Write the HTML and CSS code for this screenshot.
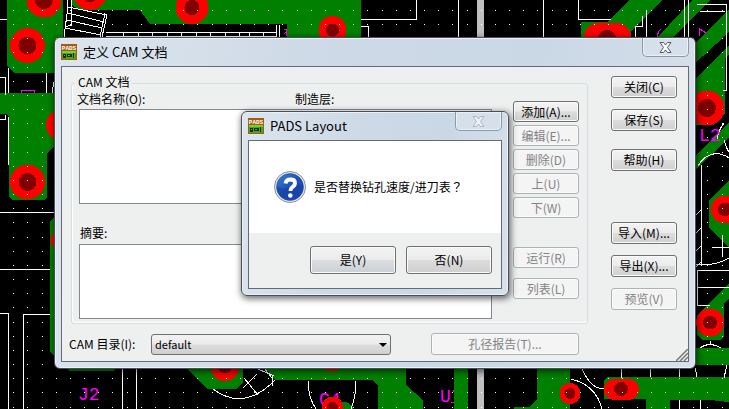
FILE: index.html
```html
<!DOCTYPE html>
<html lang="zh-CN">
<head>
<meta charset="utf-8">
<title>PADS Layout</title>
<link rel="stylesheet" href="styles.css">
</head>
<body>
<main class="desktop">
  <svg class="board" viewBox="0 0 729 409" preserveAspectRatio="xMinYMin slice" aria-hidden="true">
    <defs>
      <pattern id="dot-row" x="13" y="0" width="85" height="85" patternUnits="userSpaceOnUse">
        <path fill="#fff" d="M0 10h1v1h-1zM14 10h1v1h-1zM29 10h1v1h-1zM43 10h1v1h-1zM57 10h1v1h-1zM71 10h1v1h-1zM0 24h1v1h-1zM14 24h1v1h-1zM29 24h1v1h-1zM43 24h1v1h-1zM57 24h1v1h-1zM71 24h1v1h-1zM0 38h1v1h-1zM14 38h1v1h-1zM29 38h1v1h-1zM43 38h1v1h-1zM57 38h1v1h-1zM71 38h1v1h-1zM0 52h1v1h-1zM14 52h1v1h-1zM29 52h1v1h-1zM43 52h1v1h-1zM57 52h1v1h-1zM71 52h1v1h-1zM0 67h1v1h-1zM14 67h1v1h-1zM29 67h1v1h-1zM43 67h1v1h-1zM57 67h1v1h-1zM71 67h1v1h-1zM0 81h1v1h-1zM14 81h1v1h-1zM29 81h1v1h-1zM43 81h1v1h-1zM57 81h1v1h-1zM71 81h1v1h-1z"/>
      </pattern>
      <symbol id="pads" viewBox="0 0 16 16">
        <rect width="16" height="16" fill="#a85a10"/>
        <rect x="1" y="7" width="14" height="8" fill="#48a818"/>
        <path d="M1 7h14v2H1z" fill="#72d42a"/>
        <path d="M2 10h3v4H2zM6 10h5v3H6zM12 9h1v5h-1z" fill="#17301a"/>
        <path d="M3 11h1v1H3zM7 11h2v1H7z" fill="#7a8ca8"/>
        <text x="8" y="6" font-family="Liberation Mono" font-size="6" font-weight="700" text-anchor="middle" fill="#fff">PADS</text>
      </symbol>
    </defs>
    <rect width="729" height="409"/>
    <g fill="#008000">
      <path d="M7 0H63V37L54 73H14L7 66zM72 0H361V37H287V24H150L140 10H80L72 5z"/>
      <path d="M0 93H54V147L47 153V197L44 200H12L9 197V117L6 114H0zM54 217L50 222V352L56 358zM67 366H116L114 371H69z"/>
      <path d="M188 369L207 389H236L243 383V366zM263 366L275 380H373L378 386V409H423V400L406 385V366zM454 366H468V409H454z"/>
      <path d="M537 366H570V409H514V407H529L537 400zM607 377H729V400H670V409H646V399H604V380zM696 348H729V365H696zM701 399H729V402z"/>
      <path d="M629 0H662L631 31V40H581V22H608zM692 0H710L673 37H658zM729 9L690 48V68L729 32zM729 46L690 84V125H713L725 113V58L729 54zM729 123L711 140L690 161V175L729 138z"/>
      <path d="M729 180L709 200V228L729 248zM729 284L697 315V335L702 340H720L724 336V303L729 299z"/>
      <circle cx="344" cy="412" r="10"/>
    </g>
    <path fill="#c0c0c0" d="M477 0h7v409h-7z"/>
    <g fill="none" stroke="#fff">
      <path d="M0 19.500H7M8.500 68V93M0 77.500H5.500V95M0 119.500H5.500V115M8.500 117V165M46.500 73V93M54 82L52 93M0 212.500H54M0 269.500H50M0 313.500H8.500V409M50 314.500H23.500V409M122.500 368V409M136.500 368V409"/>
      <path d="M67.500 0V10L64 37M71.500 0V25L65 27M68 7L107 15L102 37M68 13L104 22M67 20L102 28M65 28L101 35M105 13L100 37M106 32.500H277M106 36.500H277M276.500 25V37M279.500 25V37M123.500 33V37M138.500 33V37M152.500 33V37M167.500 33V37M181.500 33V37M196.500 33V37M210.500 33V37M225.500 33V37M239.500 33V37M249.500 33V37M263.500 33V37"/>
      <path d="M361 19.500H416.500V0M361 26.500H368.500V37M458.500 0V37M543.500 0V37M578.500 0V19.500H611M642.500 16V26.500H635.500V37M646.500 10V37M684.500 0V37M688.500 0V37M697 4.500H726V90H723M700 11.500H725"/>
      <path d="M698 166C706 152 719 151 729 158M701.500 165V266M696 215L702 209M696 233L702 227M696 251L702 245M696 267L702 261M696 264Q713 267 729 258M722 235V257M712 247H729M697 305.500V270.500H729M697 287.500H729M697 305.500H710M710 341V345M700 348Q710 341 721 348M724 123Q719 129 717 139M724 140Q727 150 729 152"/>
      <path d="M213 389Q244 412 275 380M264 368L272 378M274 376L258 369M244 378L258 395M243 388L257 374M272 376V386M308 381Q308 397 316 409M356 381Q356 397 351 409M582 369Q591 389 604 389M571 379Q596 385 602 409M621.500 368V378M650.500 377V368M679.500 377V368M695 368Q696 372 697 377M727 365L724 378M679.500 400V409M700.500 400V409"/>
    </g>
    <path fill="none" stroke="#f0f" d="M21.500 93V90.500H34.500V93M284 29.500H286.500V36M284 34L287 31M658 37Q657 32 661 29M699.500 36V28.500L706 33M453 392L454 390M451 402.500H454"/>
    <g fill="#f0f" class="ref">
      <text x="78" y="400">J2</text><text x="440" y="402">U</text><text x="319" y="405">C4</text><text x="699" y="141">L2</text>
    </g>
    <g fill="#f00">
      <circle cx="44" cy="0" r="17.500"/><circle cx="90" cy="-7" r="17"/><circle cx="27.500" cy="45.500" r="17.500"/>
      <circle cx="192" cy="7.500" r="16.500"/><circle cx="332.500" cy="30" r="14"/><circle cx="61" cy="125" r="15"/>
      <circle cx="27.500" cy="182" r="17.500"/><circle cx="65" cy="240" r="14"/><circle cx="225" cy="367" r="14"/>
      <circle cx="332" cy="358" r="13.500"/><circle cx="332.500" cy="407" r="10.500"/><circle cx="570" cy="393.500" r="10.500"/>
      <rect x="584" y="23" width="47" height="34" rx="14"/><rect x="604" y="379" width="35" height="21" rx="10.500"/>
      <circle cx="707" cy="108" r="17.500"/><circle cx="725" cy="209.500" r="14"/><circle cx="710" cy="322.500" r="14"/>
    </g>
    <g fill="#800000">
      <circle cx="44" cy="0" r="9"/><circle cx="90" cy="-7" r="9"/><circle cx="27.500" cy="45.500" r="9"/>
      <circle cx="192" cy="7.500" r="7.500"/><circle cx="332.500" cy="30" r="6.500"/><circle cx="27.500" cy="182" r="9"/>
      <circle cx="225" cy="367" r="6.500"/><circle cx="332.500" cy="408" r="6"/><circle cx="570" cy="393.500" r="5.500"/>
      <circle cx="607" cy="39" r="9"/><circle cx="621" cy="389" r="7"/><circle cx="707" cy="108" r="9"/>
      <circle cx="725" cy="209.500" r="7"/><circle cx="710" cy="322.500" r="7"/>
    </g>
    <rect width="729" height="409" fill="url(#dot-row)"/>
  </svg>

  <section class="window" aria-label="定义 CAM 文档">
    <header class="titlebar">
      <svg class="app-icon" aria-hidden="true"><use href="#pads"/></svg>
      <h1 class="title">定义 CAM 文档</h1>
      <button class="close" type="button" aria-label="关闭窗口">
        <svg viewBox="0 0 13 11" aria-hidden="true"><path d="M1 .5h3.500l2 2.500 2-2.500H12L8.500 5.500l3.500 5H8.500l-2-2.500-2 2.500H1l3.500-5z" fill="#fff" stroke="#545b69"/></svg>
      </button>
    </header>
    <form class="client">
      <div class="left">
        <fieldset class="group">
          <legend>CAM 文档</legend>
          <div class="docs">
            <div class="heads"><label for="docs">文档名称(O):</label><span>制造层:</span></div>
            <select id="docs" class="list" size="5"></select>
            <label class="summary-label" for="summary">摘要:</label>
            <textarea id="summary" class="summary" readonly></textarea>
          </div>
          <div class="actions">
            <button class="btn" type="button">添加(A)...</button>
            <button class="btn" type="button" disabled>编辑(E)...</button>
            <button class="btn" type="button" disabled>删除(D)</button>
            <button class="btn" type="button" disabled>上(U)</button>
            <button class="btn" type="button" disabled>下(W)</button>
            <button class="btn run" type="button" disabled>运行(R)</button>
            <button class="btn table" type="button" disabled>列表(L)</button>
          </div>
        </fieldset>
        <div class="directory">
          <label for="dir">CAM 目录(I):</label>
          <span class="combo"><select id="dir"><option>default</option></select></span>
          <button class="btn report" type="button" disabled>孔径报告(T)...</button>
        </div>
      </div>
      <div class="commands">
        <button class="btn" type="button">关闭(C)</button>
        <button class="btn" type="button">保存(S)</button>
        <button class="btn help" type="button">帮助(H)</button>
        <button class="btn import" type="button">导入(M)...</button>
        <button class="btn" type="button">导出(X)...</button>
        <button class="btn" type="button" disabled>预览(V)</button>
      </div>
      <svg class="grip" viewBox="0 0 12 12" aria-hidden="true"><path d="M0 12L12 0M4 12L12 4M8 12L12 8" stroke="#777" stroke-width="1.500"/></svg>
    </form>
  </section>

  <section class="window message" role="dialog" aria-label="PADS Layout">
    <header class="titlebar">
      <svg class="app-icon" aria-hidden="true"><use href="#pads"/></svg>
      <h2 class="title">PADS Layout</h2>
      <button class="close" type="button" aria-label="关闭" disabled>
        <svg viewBox="0 0 13 11" aria-hidden="true"><path d="M1 .5h3.500l2 2.500 2-2.500H12L8.500 5.500l3.500 5H8.500l-2-2.500-2 2.500H1l3.500-5z" fill="#eef2f6" stroke="#adb5bf"/></svg>
      </button>
    </header>
    <div class="message-client">
      <div class="message-body">
        <svg class="question" viewBox="0 0 32 32" aria-hidden="true">
          <defs><linearGradient id="blue" x1="0" y1="0" x2="1" y2="1"><stop offset="0" stop-color="#3f83dc"/><stop offset=".5" stop-color="#1d50b4"/><stop offset="1" stop-color="#2c4fc0"/></linearGradient></defs>
          <circle cx="16" cy="16" r="15.500" fill="#e4e8ec" stroke="#8b929b"/>
          <circle cx="16" cy="16" r="13.500" fill="url(#blue)" stroke="#173b86" stroke-width=".5"/>
          <path d="M3 15Q10 20 16 15T29 14Q30 22 23 27Q13 31 6 24Q3 20 3 15z" fill="#123c9c" opacity=".55"/>
          <path d="M11.500 12.500Q12 8.500 16.500 8.500Q21 8.500 21 12Q21 14.500 18.500 16Q16.500 17.300 16.500 20" fill="none" stroke="#fff" stroke-width="3.800"/>
          <circle cx="16.300" cy="24.500" r="2.300" fill="#fff"/>
        </svg>
        <p>是否替换钻孔速度/进刀表<span class="mark" lang="zh-TW">？</span></p>
      </div>
      <div class="message-actions">
        <button class="btn default" type="button">是(Y)</button>
        <button class="btn" type="button">否(N)</button>
      </div>
    </div>
  </section>
</main>
</body>
</html>
```
FILE: styles.css
```css
* { box-sizing: border-box; }

body {
  margin: 0;
  font: 12px/16px "Noto Sans CJK SC", sans-serif;
  color: #000;
}

.desktop {
  position: relative;
  min-height: 100vh;
  padding: 37px 33px 40px 54px;
  background: #000;
  overflow: hidden;
}

.board {
  position: absolute;
  inset: 0;
  width: 100%;
  height: 100%;
  shape-rendering: crispEdges;
}

.ref {
  font: 18px "Liberation Mono", monospace;
}

.window {
  position: relative;
  padding: 0 6px 6px;
  border: 1px solid #4a4f57;
  border-radius: 6px;
  background: linear-gradient(100deg, #dce5ee 0, #cdd9e6 40%, #cad7e5 70%, #d7e1eb 100%);
  box-shadow: inset 0 0 0 1px #eaf1f8, 1px 2px 6px 1px rgb(0 0 0 / 55%);
}

.titlebar {
  display: flex;
  align-items: center;
  gap: 6px;
  height: 28px;
}

.app-icon {
  width: 16px;
  height: 16px;
}

.title {
  flex: 1;
  margin: 0;
  font-size: 13px;
  font-weight: 400;
  line-height: 20px;
}

.close {
  display: flex;
  align-items: center;
  justify-content: center;
  align-self: flex-start;
  width: 47px;
  height: 19px;
  padding: 0;
  border: 1px solid #8d99a8;
  border-top: 0;
  border-radius: 0 0 5px 5px;
  background: #d5e0eb;
  box-shadow: inset 0 0 0 1px #e9f0f7;
}

.close svg {
  width: 13px;
  height: 11px;
}

.client {
  position: relative;
  display: flex;
  gap: 23px;
  padding: 8px 11px 6px 7px;
  border: 1px solid #666a78;
  background: #eef0f0;
}

.left { flex: 1; }

.group {
  display: flex;
  min-width: 0;
  gap: 21px;
  margin: 0 0 0 2px;
  padding: 0 8px 4px 7px;
  border: 1px solid #d3dde5;
  border-radius: 3px;
  box-shadow: inset 1px 0 #fff, inset 0 -1px #fff;
}

.group legend {
  height: 16px;
  margin-left: -4px;
  padding: 0 3px;
  line-height: 14px;
}

.docs {
  display: flex;
  flex: 1;
  flex-direction: column;
}

.heads {
  display: grid;
  grid-template-columns: 218px 1fr;
  height: 18px;
  margin-left: -2px;
}

.list {
  width: 100%;
  height: 95px;
  border: 1px solid #828790;
  border-radius: 0;
  background: #fff;
}

.summary-label {
  padding: 21px 0 3px 1px;
}

.summary {
  display: block;
  width: 100%;
  height: 75px;
  border: 1px solid #828790;
  background: #fff;
  resize: none;
}

.actions {
  display: flex;
  flex-direction: column;
  gap: 3px;
  width: 66px;
  padding-top: 10px;
}

.btn {
  width: 66px;
  height: 22px;
  padding: 0;
  border: 1px solid #707070;
  border-radius: 3px;
  background: linear-gradient(#f3f3f3 0, #ebebeb 48%, #dcdcdc 52%, #cfcfcf 100%);
  box-shadow: inset 0 0 0 1px #fbfbfb;
  color: #000;
  font: inherit;
  line-height: 18px;
  white-space: nowrap;
}

.btn:disabled {
  border-color: #adb2b5;
  background: #f4f4f4;
  color: #838383;
}

.actions .btn { height: 21px; }
.actions .run { margin-top: 26px; }
.actions .table { margin-top: 7px; }

.directory {
  display: flex;
  align-items: center;
  margin-top: 9px;
}

.directory label { width: 82px; }

.combo {
  position: relative;
  flex: 1;
}

.combo::after {
  content: "";
  position: absolute;
  top: 9px;
  right: 4px;
  border: 4px solid transparent;
  border-top-color: #000;
  border-bottom: 0;
  pointer-events: none;
}

.combo select {
  appearance: none;
  display: block;
  width: 100%;
  height: 21px;
  padding: 0 16px 0 3px;
  border: 1px solid #707070;
  border-radius: 3px;
  background: linear-gradient(#f2f2f2 0, #ebebeb 48%, #dddddd 52%, #cfcfcf 100%);
  color: #000;
  font: 11px/16px "Noto Sans CJK SC", sans-serif;
}

.report {
  width: 148px;
  margin: 0 9px 0 40px;
}

.commands {
  display: flex;
  flex-direction: column;
  gap: 11px;
  padding-top: 1px;
}

.help { margin-top: 7px; }
.import { margin-top: 40px; }

.grip {
  position: absolute;
  right: 0;
  bottom: 0;
  width: 12px;
  height: 12px;
}

.message {
  position: absolute;
  top: 111px;
  left: 241px;
  width: 268px;
}

.message-client {
  border: 1px solid #666a78;
  background: #eef0f0;
}

.message-body {
  display: flex;
  align-items: center;
  gap: 8px;
  height: 92px;
  padding-left: 25px;
  background: #fff;
}

.message-body p { margin: 0; }

.mark { font-family: "Noto Sans CJK TC", sans-serif; }

.question {
  width: 32px;
  height: 32px;
}

.message-actions {
  display: flex;
  justify-content: flex-end;
  gap: 10px;
  padding: 13px 9px 14px;
}

.message-actions .btn {
  width: 86px;
  height: 28px;
}

.message-actions .default {
  background: linear-gradient(#f3f3f3 0, #ebebeb 48%, #dbdee0 52%, #cbd0d4 100%);
}
```
